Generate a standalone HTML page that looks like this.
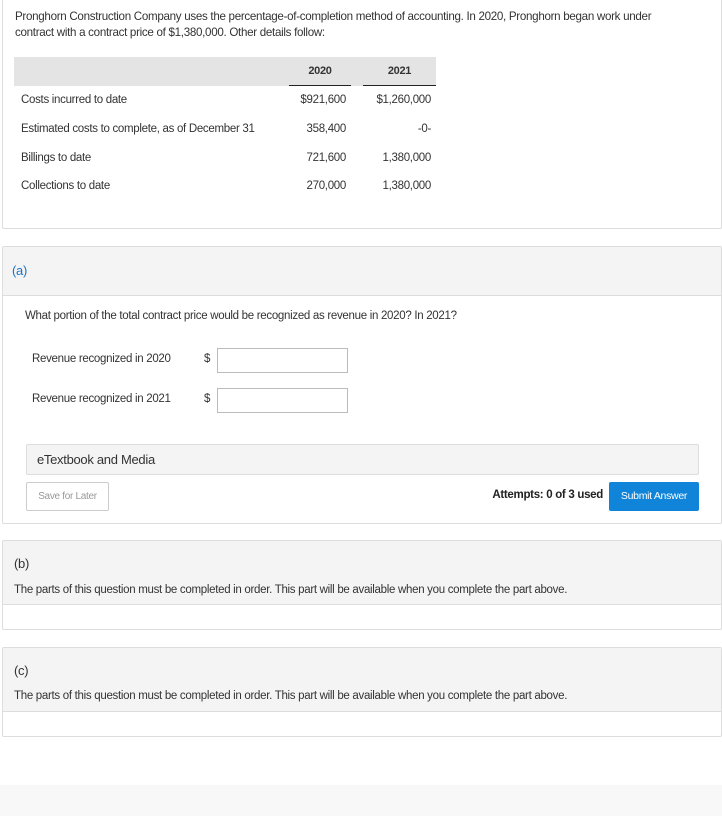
<!DOCTYPE html>
<html><head><style>
*{box-sizing:border-box;margin:0;padding:0}
body{width:722px;height:816px;background:#fff;font-family:"Liberation Sans",sans-serif;font-size:11.5px;color:#333;position:relative;overflow:hidden;letter-spacing:-0.3px}
.abs{position:absolute}
.panel{position:absolute;left:2px;width:720px;border:1px solid #ddd;border-radius:2px}
.num{text-align:right}
input{position:absolute;border:1px solid #bbb;background:#fff;height:25px;width:131px}
</style></head><body>
<div class="panel" style="top:-2px;height:231px;border-top:none"></div>
<div class="abs" style="left:15px;top:9px;width:705px;line-height:16px;font-size:11.6px;white-space:nowrap">Pronghorn Construction Company uses the percentage-of-completion method of accounting. In 2020, Pronghorn began work under<br>contract with a contract price of $1,380,000. Other details follow:</div>
<div class="abs" style="left:14px;top:57px;width:422px;height:29px;background:#e4e4e4"></div>
<div class="abs" style="left:289px;top:65px;width:62px;text-align:center;font-weight:bold;font-size:11px">2020</div>
<div class="abs" style="left:363px;top:65px;width:73px;text-align:center;font-weight:bold;font-size:11px">2021</div>
<div class="abs" style="left:289px;top:85px;width:62px;height:1px;background:#222"></div>
<div class="abs" style="left:363px;top:85px;width:73px;height:1px;background:#222"></div>
<div class="abs" style="left:21px;top:94px">Costs incurred to date</div>
<div class="abs" style="left:21px;top:123px">Estimated costs to complete, as of December 31</div>
<div class="abs" style="left:21px;top:152px">Billings to date</div>
<div class="abs" style="left:21px;top:180px">Collections to date</div>
<div class="abs num" style="left:280px;width:66px;top:94px">$921,600</div>
<div class="abs num" style="left:280px;width:66px;top:123px">358,400</div>
<div class="abs num" style="left:280px;width:66px;top:152px">721,600</div>
<div class="abs num" style="left:280px;width:66px;top:180px">270,000</div>
<div class="abs num" style="left:350px;width:81px;top:94px">$1,260,000</div>
<div class="abs num" style="left:350px;width:81px;top:123px">-0-</div>
<div class="abs num" style="left:350px;width:81px;top:152px">1,380,000</div>
<div class="abs num" style="left:350px;width:81px;top:180px">1,380,000</div>

<div class="panel" style="top:246px;height:278px"></div>
<div class="abs" style="left:3px;top:247px;width:718px;height:49px;background:#f4f4f4;border-bottom:1px solid #ddd"></div>
<div class="abs" style="left:12px;top:263px;color:#1a73c8;font-size:13px">(a)</div>
<div class="abs" style="left:25px;top:310px">What portion of the total contract price would be recognized as revenue in 2020? In 2021?</div>
<div class="abs" style="left:32px;top:353px">Revenue recognized in 2020</div>
<div class="abs" style="left:204px;top:353px">$</div>
<input style="left:217px;top:348px">
<div class="abs" style="left:32px;top:393px">Revenue recognized in 2021</div>
<div class="abs" style="left:204px;top:393px">$</div>
<input style="left:217px;top:388px">
<div class="abs" style="left:26px;top:444px;width:673px;height:31px;background:#f4f4f4;border:1px solid #ddd;border-radius:2px"></div>
<div class="abs" style="left:37px;top:452px;font-size:13px">eTextbook and Media</div>
<div class="abs" style="left:26px;top:482px;width:83px;height:29px;border:1px solid #ccc;border-radius:2px;color:#999;font-size:10px;text-align:center;line-height:27px">Save for Later</div>
<div class="abs" style="left:480px;width:123px;top:489px;text-align:right;font-weight:bold;font-size:11.5px;color:#222">Attempts: 0 of 3 used</div>
<div class="abs" style="left:609px;top:482px;width:90px;height:29px;background:#0f84d8;border-radius:2px;color:#fff;font-size:10.5px;text-align:center;line-height:29px">Submit Answer</div>

<div class="panel" style="top:540px;height:90px"></div>
<div class="abs" style="left:3px;top:541px;width:718px;height:64px;background:#f4f4f4;border-bottom:1px solid #ddd"></div>
<div class="abs" style="left:14px;top:556px;font-size:13px">(b)</div>
<div class="abs" style="left:14px;top:584px">The parts of this question must be completed in order. This part will be available when you complete the part above.</div>

<div class="panel" style="top:647px;height:90px"></div>
<div class="abs" style="left:3px;top:648px;width:718px;height:64px;background:#f4f4f4;border-bottom:1px solid #ddd"></div>
<div class="abs" style="left:14px;top:663px;font-size:13px">(c)</div>
<div class="abs" style="left:14px;top:690px">The parts of this question must be completed in order. This part will be available when you complete the part above.</div>

<div class="abs" style="left:0;top:785px;width:722px;height:31px;background:#f8f8f8"></div>
</body></html>
